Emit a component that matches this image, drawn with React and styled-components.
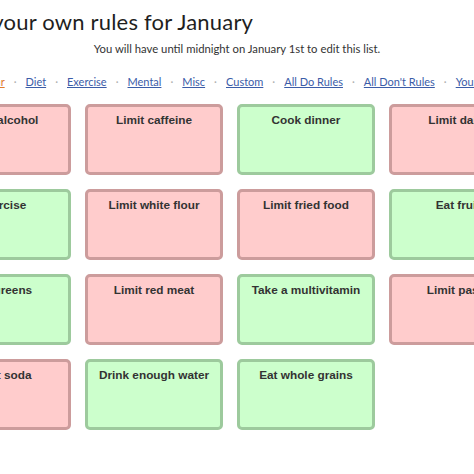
import styled, { createGlobalStyle } from 'styled-components'

const GlobalStyle = createGlobalStyle`
  html, body {
    margin: 0;
    padding: 0;
    background: #fff;
    overflow: hidden;
  }
  body {
    display: flex;
    justify-content: center;
  }
`

const Page = styled.div`
  flex: none;
  width: 622px;
  padding: 0 7px;
  box-sizing: border-box;
  font-family: Lato, "Open Sans", sans-serif;
  color: #222;
`

const Title = styled.h1`
  margin: 6px 0 0 0;
  font-size: 22px;
  font-weight: 400;
  line-height: 32px;
  letter-spacing: 0.2px;
  color: #1f1f1f;
`

const Subtitle = styled.p`
  margin: 3px 0 0 0;
  text-align: center;
  font-size: 11.3px;
  line-height: 16px;
  color: #333;
`

const Nav = styled.nav`
  display: flex;
  justify-content: center;
  align-items: center;
  margin-top: 16px;
  font-size: 11px;
  line-height: 18px;
`

const NavLink = styled.a`
  color: ${p => (p.$active ? '#e07a2e' : '#3b5ca8')};
  text-decoration: underline;
  white-space: nowrap;
`

const Dot = styled.span`
  color: #b0b0b0;
  padding: 0 9px;
  font-size: 11px;
`

const Grid = styled.div`
  display: grid;
  grid-template-columns: repeat(4, 138px);
  column-gap: 14px;
  row-gap: 14px;
  margin-top: 13px;
`

const Card = styled.div`
  height: 71px;
  box-sizing: border-box;
  border: 3px solid ${p => (p.$ok ? '#9dca9d' : '#cc9c9c')};
  border-radius: 5px;
  background: ${p => (p.$ok ? '#ccffcc' : '#ffcccc')};
  padding: 6px 4px;
  text-align: center;
  font-family: "Liberation Sans", Arial, sans-serif;
  font-weight: 700;
  font-size: 11.8px;
  line-height: 15px;
  color: #333;
`

const links = ['Popular', 'Diet', 'Exercise', 'Mental', 'Misc', 'Custom', 'All Do Rules', "All Don't Rules", 'Your Rules']

const rules = [
  ['Limit alcohol', false],
  ['Limit caffeine', false],
  ['Cook dinner', true],
  ['Limit dairy', false],
  ['Exercise', true],
  ['Limit white flour', false],
  ['Limit fried food', false],
  ['Eat fruit', true],
  ['Eat greens', true],
  ['Limit red meat', false],
  ['Take a multivitamin', true],
  ['Limit pasta', false],
  ['Limit soda', false],
  ['Drink enough water', true],
  ['Eat whole grains', true],
]

export default function App() {
  return (
    <>
      <GlobalStyle />
      <Page>
        <Title>Make your own rules for January</Title>
        <Subtitle>You will have until midnight on January 1st to edit this list.</Subtitle>
        <Nav>
          {links.map((l, i) => (
            <span key={l}>
              {i > 0 && <Dot>·</Dot>}
              <NavLink href="#" $active={i === 0}>{l}</NavLink>
            </span>
          ))}
        </Nav>
        <Grid>
          {rules.map(([name, ok]) => (
            <Card key={name} $ok={ok}>{name}</Card>
          ))}
        </Grid>
      </Page>
    </>
  )
}
